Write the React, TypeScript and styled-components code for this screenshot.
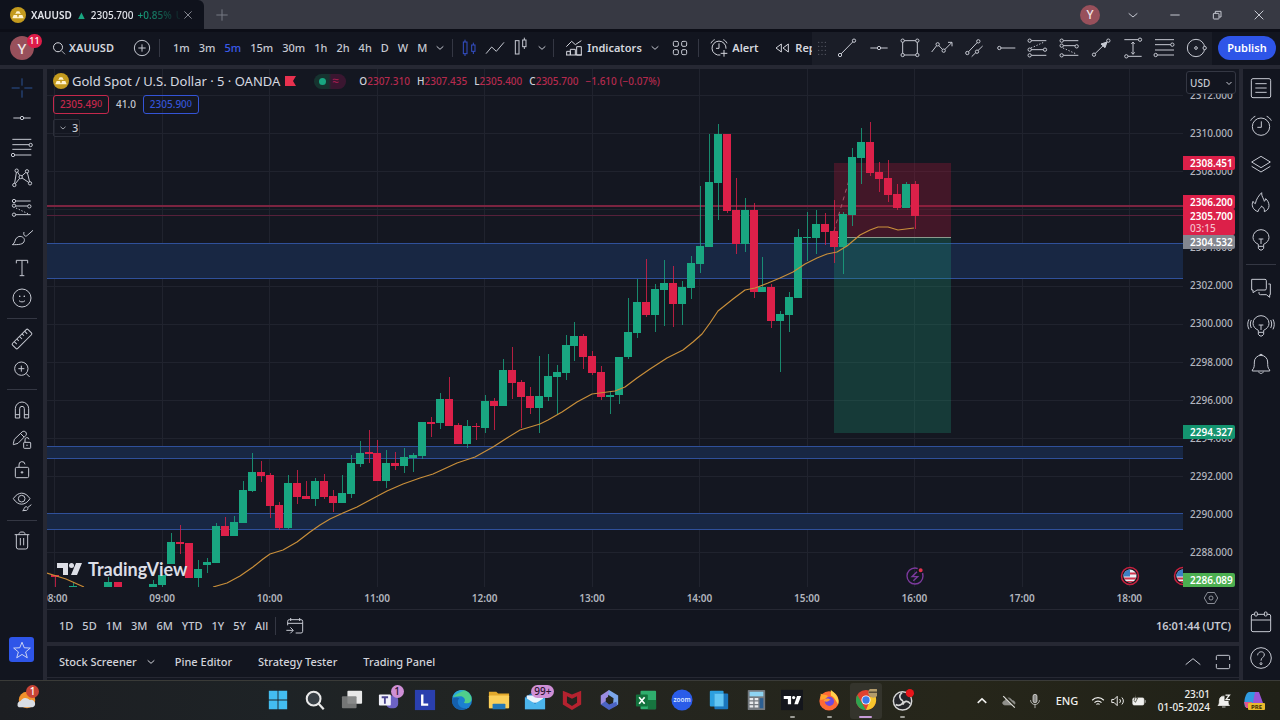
import React from 'react';
import styled, { createGlobalStyle, css } from 'styled-components';

const c = {
  bg: '#141721',
  bar: '#12151f',
  panel: '#1a1d27',
  line: '#262833',
  grid: '#20232e',
  text: '#c6c9d2',
  dim: '#b2b5be',
  blue: '#2e55e8',
  up: '#19a681',
  down: '#dc2049',
};

const Global = createGlobalStyle`
  * { box-sizing: border-box; }
  body { margin: 0; background: ${c.bg}; color: ${c.text}; font: 500 11px/16px 'Noto Sans', 'Open Sans', sans-serif; }
  button, select, a { font: inherit; color: inherit; }
  button { background: none; border: 0; padding: 0; margin: 0; }
`;

/* ---------- shared pieces ---------- */

const Page = styled.div`
  min-height: 100vh;
  display: flex;
  flex-direction: column;
`;

const IconButton = styled.button<{ $w?: number; $h?: number; $color?: string }>`
  width: ${(p) => (p.$w ? `${p.$w}px` : 'auto')};
  height: ${(p) => (p.$h ? `${p.$h}px` : 'auto')};
  color: ${(p) => p.$color || c.text};
  flex: none;
  display: flex;
  align-items: center;
  justify-content: center;
`;

const Svg = styled.svg<{ $size: number }>`
  width: ${(p) => p.$size}px;
  height: ${(p) => p.$size}px;
  flex: none;
  display: block;
  overflow: visible;
  fill: none;
  stroke: currentColor;
  stroke-width: 3;
  .n { fill: ${c.panel}; }
  .f { fill: currentColor; }
  .d { stroke-dasharray: 4 5; }
`;

const Glyph = ({ size = 24, children }: { size?: number; children: React.ReactNode }) => (
  <Svg $size={size} viewBox="0 0 72 72" aria-hidden="true">
    {children}
  </Svg>
);

const P = ({ d, cls }: { d: string; cls?: string }) => <path d={d} className={cls} />;
const Dots = ({ at }: { at: number[][] }) => (
  <>
    {at.map(([x, y]) => (
      <circle key={`${x}-${y}`} cx={x} cy={y} r={5} className="n" />
    ))}
  </>
);

const Chevron = ({ size = 24 }: { size?: number }) => (
  <Glyph size={size}>
    <P d="M26 31 36 40 46 31" />
  </Glyph>
);

const Sep = styled.span`
  width: 7px;
  flex: none;
  display: flex;
  justify-content: center;
  &::before { content: ''; width: 1px; height: 18px; background: #343743; }
`;

const Avatar = styled.span<{ $size: number }>`
  width: ${(p) => p.$size}px;
  height: ${(p) => p.$size}px;
  border-radius: 50%;
  background: #98505b;
  color: #f0e4e6;
  display: flex;
  align-items: center;
  justify-content: center;
  font-size: ${(p) => (p.$size > 20 ? 15 : 12)}px;
  position: relative;
`;

const Gold = ({ size = 16 }: { size?: number }) => (
  <svg width={size} height={size} viewBox="0 0 48 48" aria-hidden="true">
    <circle cx="24" cy="24" r="24" fill="#c39a1e" />
    <path d="M20 13h8l4 8H16zM11 24h10l4 10H7zM27 24h10l4 10H23z" fill="#fff3cf" />
    <path d="M19 21h10M22 29l4 0" stroke="#c39a1e" strokeWidth="2" />
  </svg>
);

/* ---------- browser tab strip ---------- */

const TabStrip = styled.header`
  height: 32px;
  flex: none;
  display: flex;
  background: #373943;
  border-bottom: 3px solid #0c0e17;
`;
const Tab = styled.div`
  width: 204px;
  padding: 0 5px 0 10px;
  display: flex;
  align-items: center;
  background: #0f121c;
  border-radius: 0 6px 0 0;
  color: #e2e4ea;
  font-size: 10px;
`;
const TabTitle = styled.span`
  margin-left: 5px;
  width: 149px;
  flex: none;
  display: flex;
  gap: 4px;
  white-space: nowrap;
  mask-image: linear-gradient(90deg, #000 108px, transparent 154px);
  i { color: ${c.up}; font-style: normal; font-size: 11px; }
  b { font-weight: 600; }
  em { color: ${c.up}; font-style: normal; }
`;
const WindowButtons = styled.div`
  margin-left: auto;
  display: flex;
  align-items: center;
  > span { margin-right: 12px; }
`;

/* ---------- top toolbar ---------- */

const Toolbar = styled.nav`
  height: 37px;
  flex: none;
  display: flex;
  background: ${c.bar};
  border-bottom: 4px solid ${c.line};
`;
const ToolbarMain = styled.div`
  flex: 1 1 0;
  min-width: 0;
  overflow: hidden;
  padding-bottom: 1px;
  display: flex;
  align-items: center;
`;
const AvatarCell = styled.div`
  width: 50px;
  flex: none;
  padding-left: 10px;
`;
const AvatarBadge = styled.span`
  position: absolute;
  left: 17px;
  top: -2px;
  width: 15px;
  height: 14px;
  border-radius: 7px;
  background: #dd1c48;
  color: #fff;
  font-size: 9px;
  line-height: 14px;
  text-align: center;
`;
const TextButton = styled.button<{ $w: number; $pad?: number }>`
  width: ${(p) => p.$w}px;
  padding-left: ${(p) => p.$pad ?? 0}px;
  flex: none;
  display: flex;
  align-items: center;
  gap: 1px;
  font-weight: 600;
  color: #d5d7de;
`;
const Intervals = styled.div`
  min-width: 267px;
  flex: none;
  display: flex;
  padding-left: 5px;
`;
const Interval = styled.button<{ $on?: boolean }>`
  padding: 0 4px 0 5px;
  color: ${(p) => (p.$on ? '#3a5bea' : c.text)};
`;
const DrawingBar = styled.div`
  width: 400px;
  flex: none;
  padding-bottom: 1px;
  display: flex;
  align-items: center;
  background: ${c.panel};
`;
const DrawingTools = styled.div`
  flex: 1;
  display: flex;
  > button { flex: 1; }
`;
const Publish = styled.button`
  width: 58px;
  height: 24px;
  margin: 4px 4px 0 6px;
  flex: none;
  border-radius: 12px;
  background: ${c.blue};
  color: #fff;
  font-weight: 600;
`;

/* ---------- body ---------- */

const Main = styled.main`
  flex: 1;
  display: grid;
  grid-template-columns: 47px minmax(0, 1fr) 41px;
`;
const SideBar = styled.aside<{ $side: 'left' | 'right' }>`
  background: ${c.bar};
  display: flex;
  flex-direction: column;
  align-items: center;
  ${(p) =>
    p.$side === 'left'
      ? css`padding: 4px 0 18px; border-right: 4px solid ${c.line};`
      : css`padding: 0 1px 4px 0; border-left: 4px solid ${c.line};`}
  .n { fill: ${c.bar}; }
`;
const SideLine = styled.hr<{ $h: number }>`
  width: 30px;
  height: ${(p) => p.$h}px;
  margin: 0;
  border: 0;
  flex: none;
  background: linear-gradient(#343743, #343743) center / 100% 1px no-repeat;
`;
const Spacer = styled.span`
  flex: 1;
`;
const StarButton = styled.button`
  width: 25px;
  height: 25px;
  border-radius: 3px;
  background: ${c.blue};
  color: #e6e9f5;
  display: flex;
  align-items: center;
  justify-content: center;
`;

const Center = styled.section`
  display: flex;
  flex-direction: column;
  min-width: 0;
`;
const ChartGrid = styled.div`
  flex: 1;
  display: grid;
  grid-template-columns: minmax(0, 1fr) 56px;
  grid-template-rows: minmax(518px, 1fr) 22px;
`;
const Plot = styled.div`
  position: relative;
  overflow: hidden;
`;
const PlotSvg = styled.svg`
  position: absolute;
  inset: 0;
  width: 100%;
  height: 100%;
`;
const Legend = styled.div`
  position: absolute;
  left: 6px;
  top: 2px;
  right: 0;
`;
const LegendRow = styled.div`
  display: flex;
  align-items: center;
  height: 20px;
`;
const Title = styled.h1`
  margin: 0 5px 0 3px;
  font-size: 13px;
  font-weight: 400;
  white-space: nowrap;
  color: #d6d9e0;
`;
const Status = styled.span`
  width: 32px;
  height: 15px;
  margin: 0 13px 0 18px;
  border-radius: 8px;
  display: flex;
  align-items: center;
  background: linear-gradient(90deg, #16332f 45%, #3a1630 55%);
  color: #b01e55;
  font-size: 12px;
  gap: 6px;
  padding-left: 5px;
  &::before { content: ''; width: 7px; height: 7px; border-radius: 50%; background: ${c.up}; }
`;
const Ohlc = styled.dl`
  margin: 0;
  display: flex;
  gap: 7px;
  font-size: 10px;
  white-space: nowrap;
  div { display: flex; }
  dt { color: #d0d2da; }
  dd { margin: 0; color: #b52a4e; }
`;
const Quotes = styled(LegendRow)`
  margin-top: 3px;
  gap: 7px;
  font-size: 10px;
`;
const Quote = styled.button<{ $c: string }>`
  width: 56px;
  height: 19px;
  border: 1px solid ${(p) => p.$c};
  border-radius: 3px;
  color: ${(p) => p.$c};
  line-height: 16px;
  sup { font-size: 9px; line-height: 0; vertical-align: 1px; }
`;
const Collapse = styled.button`
  width: 27px;
  height: 18px;
  margin-top: 5px;
  border: 1px solid #2c2f3a;
  border-radius: 2px;
  display: flex;
  align-items: center;
`;
const Brand = styled.div`
  position: absolute;
  left: 10px;
  bottom: 7px;
  display: flex;
  align-items: center;
  gap: 6px;
  color: #dcdee6;
  font: 700 18px/22px Lato, 'Open Sans', sans-serif;
`;
const EventPin = styled.div`
  position: absolute;
  bottom: 1px;
  width: 20px;
  height: 20px;
  margin-left: -10px;
`;

const PriceAxis = styled.div`
  position: relative;
  display: flex;
  flex-direction: column;
  font-size: 10px;
  line-height: 12px;
  padding-left: 3px;
  color: ${c.dim};
`;
const Currency = styled.select`
  position: relative;
  z-index: 1;
  appearance: none;
  width: 50px;
  height: 23px;
  margin: 2px 0 0;
  padding: 0 3px;
  border: 1px solid #343743;
  border-radius: 3px;
  background: ${c.bar} url("data:image/svg+xml,%3Csvg xmlns='http://www.w3.org/2000/svg' width='8' height='6' fill='none' stroke='%23c6c9d2'%3E%3Cpath d='M1.500 2 4 4.500 6.500 2'/%3E%3C/svg%3E") right 2px center no-repeat;
  color: ${c.text};
`;
const Ticks = styled.div`
  flex: 1;
  margin: -5px 0 29px 4px;
  display: flex;
  flex-direction: column;
  justify-content: space-between;
`;
const Tick = styled.span<{ $covered: boolean }>`
  visibility: ${(p) => (p.$covered ? 'hidden' : 'visible')};
`;
const PriceTag = styled.div<{ $bg: string; $h?: number }>`
  position: absolute;
  left: 0;
  width: 52px;
  height: ${(p) => p.$h ?? 14}px;
  margin-top: -7px;
  padding: 0 0 0 7px;
  border-radius: 0 2px 2px 0;
  background: ${(p) => p.$bg};
  color: #fff;
  font-weight: 600;
  line-height: 14px;
  small { display: block; font-size: 10px; font-weight: 500; line-height: 11px; color: #f6bfcb; }
`;
const TimeAxis = styled.div`
  overflow: hidden;
  color: ${c.dim};
`;
const TimeLabels = styled.div`
  margin-left: -46px;
  display: flex;
  line-height: 22px;
  font-size: 10px;
  font-weight: 600;
  span { flex: 1; text-align: center; }
`;
const AxisCorner = styled.div`
  display: flex;
  align-items: center;
  justify-content: center;
  color: ${c.dim};
`;

const RangeRow = styled.div`
  height: 33px;
  padding: 0 8px 0 7px;
  border-top: 1px solid ${c.line};
  background: ${c.bar};
  display: flex;
  align-items: center;
`;
const Range = styled.button`
  padding: 0 4px 0 5px;
`;
const Clock = styled.button`
  margin-left: auto;
  font-weight: 600;
`;
const PanelTabs = styled.div`
  height: 36px;
  margin-bottom: 2px;
  border-top: 4px solid ${c.line};
  border-bottom: 1px solid ${c.line};
  background: ${c.bar};
  padding: 0 4px 0 12px;
  display: flex;
  align-items: center;
  gap: 26px;
`;
const PanelTab = styled.button`
  display: flex;
  align-items: center;
  color: #d2d4db;
`;
const Caret = styled.span`
  width: 12px;
  margin: 0 -8px 0 8px;
  display: flex;
  justify-content: center;
`;
const PanelTools = styled.div`
  margin-left: auto;
  display: flex;
  gap: 6px;
`;

/* ---------- taskbar ---------- */

const Taskbar = styled.footer`
  height: 40px;
  flex: none;
  display: grid;
  grid-template-columns: 260px 661px 1fr;
  align-items: center;
  border-top: 1px solid #3a3b38;
  background: linear-gradient(90deg, #1c1e22 0, #1e2326 22%, #24251f 50%, #26261a 75%, #202118 100%);
  color: #f0f0ee;
`;
const Dock = styled.div`
  display: grid;
  grid-template-columns: repeat(18, 1fr);
  justify-items: center;
`;
const AppButton = styled.button<{ $on?: boolean; $run?: boolean }>`
  position: relative;
  width: 32px;
  height: 36px;
  padding-bottom: 1px;
  border-radius: 3px;
  display: flex;
  align-items: center;
  justify-content: center;
  background: ${(p) => (p.$on ? '#34342c' : 'none')};
  svg { width: 22px; height: 22px; display: block; }
  ${(p) =>
    (p.$run || p.$on) &&
    css`
      &::after {
        content: '';
        position: absolute;
        bottom: 1px;
        width: ${p.$on ? 13 : 5}px;
        height: 2px;
        border-radius: 1px;
        background: ${p.$on ? '#c79bd8' : '#9b9b95'};
      }
    `}
`;
const AppBadge = styled.span<{ $w: number }>`
  position: absolute;
  top: 2px;
  left: ${(p) => (p.$w > 14 ? 12 : 18)}px;
  width: ${(p) => p.$w}px;
  height: 13px;
  border-radius: 7px;
  background: #cf8fd6;
  color: #2a1430;
  font-size: 10px;
  line-height: 13px;
  text-align: center;
`;
const WeatherCell = styled.div`
  padding-left: 11px;
`;
const WeatherBadge = styled(AppBadge)`
  background: #c94436;
  color: #fff;
  left: 15px;
`;
const Tray = styled.div`
  display: flex;
  align-items: center;
  justify-content: flex-end;
  padding-right: 10px;
`;
const TrayItem = styled.button<{ $w: number; $dim?: boolean }>`
  width: ${(p) => p.$w}px;
  color: ${(p) => (p.$dim ? '#8f8f8a' : 'inherit')};
  display: flex;
  justify-content: center;
`;
const DateTime = styled.div`
  width: 58px;
  text-align: right;
  white-space: nowrap;
  font-size: 10px;
  line-height: 13px;
`;

/* ---------- chart data ---------- */

type Candle = [x: number, top: number, bottom: number, high: number, low: number, up: 0 | 1];
const candles: Candle[] = [
  [55, 575, 577, 575, 587, 0], [73, 586, 587, 582, 587, 1], [108, 582, 587, 577, 587, 1], [118, 582, 587, 582, 587, 0],
  [153, 584, 587, 580, 587, 1], [162, 575, 585, 575, 587, 1], [171, 542, 564, 533, 564, 1], [180, 542, 544, 525, 554, 0],
  [189, 543, 578, 543, 578, 0], [198, 569, 578, 560, 587, 1], [207, 562, 565, 558, 573, 1], [216, 526, 563, 523, 563, 1],
  [225, 526, 536, 517, 536, 0], [234, 522, 536, 516, 536, 1], [243, 490, 523, 481, 523, 1], [252, 472, 491, 453, 492, 1],
  [261, 472, 476, 461, 482, 0], [270, 475, 506, 473, 518, 0], [279, 505, 528, 502, 530, 0], [288, 483, 528, 475, 529, 1],
  [297, 483, 497, 470, 504, 0], [306, 496, 499, 481, 499, 0], [315, 481, 499, 478, 506, 1], [324, 481, 497, 474, 499, 0],
  [333, 496, 503, 490, 512, 0], [342, 493, 503, 475, 503, 1], [351, 463, 494, 455, 498, 1], [360, 453, 464, 441, 467, 1],
  [369, 452, 454, 430, 463, 0], [377, 453, 481, 440, 481, 0], [386, 463, 481, 450, 488, 1], [395, 463, 466, 452, 470, 0],
  [404, 457, 466, 448, 473, 1], [413, 455, 458, 453, 472, 1], [422, 422, 456, 422, 459, 1], [431, 422, 424, 417, 437, 0],
  [440, 399, 423, 393, 429, 1], [449, 399, 426, 377, 426, 0], [458, 425, 444, 423, 444, 0], [467, 426, 444, 420, 448, 1],
  [476, 426, 427, 423, 440, 0], [485, 401, 428, 395, 433, 1], [494, 401, 406, 398, 430, 0], [503, 370, 406, 359, 406, 1],
  [512, 370, 383, 347, 399, 0], [521, 382, 397, 380, 428, 0], [530, 396, 408, 387, 414, 0], [539, 396, 408, 356, 433, 1],
  [548, 376, 397, 354, 401, 1], [557, 372, 377, 365, 414, 1], [566, 345, 373, 335, 380, 1], [574, 336, 346, 322, 361, 1],
  [583, 336, 357, 334, 369, 0], [592, 356, 373, 351, 375, 0], [601, 372, 397, 366, 400, 0], [610, 395, 397, 391, 414, 1],
  [619, 357, 395, 357, 404, 1], [628, 332, 357, 298, 359, 1], [637, 302, 333, 279, 338, 1], [646, 302, 315, 259, 317, 0],
  [655, 289, 315, 284, 332, 1], [664, 283, 290, 260, 326, 1], [673, 283, 304, 266, 327, 0], [682, 287, 304, 281, 325, 1],
  [691, 263, 288, 256, 299, 1], [700, 246, 264, 186, 273, 1], [709, 182, 247, 134, 247, 1], [718, 134, 183, 124, 220, 1],
  [727, 134, 211, 134, 213, 0], [736, 210, 244, 178, 254, 0], [745, 210, 244, 198, 252, 1], [754, 210, 292, 203, 298, 0],
  [762, 287, 292, 257, 292, 1], [771, 287, 321, 284, 328, 0], [780, 314, 321, 311, 372, 1], [789, 297, 315, 292, 332, 1],
  [798, 237, 298, 229, 298, 1], [807, 237, 238, 212, 261, 1], [816, 224, 238, 210, 254, 1], [825, 224, 232, 213, 245, 0],
  [834, 231, 247, 200, 263, 0], [843, 214, 247, 212, 274, 1], [852, 157, 215, 148, 226, 1], [861, 142, 158, 128, 184, 1],
  [870, 142, 173, 122, 176, 0], [879, 172, 179, 162, 192, 0], [888, 178, 195, 160, 202, 0], [897, 194, 208, 184, 210, 0],
  [906, 184, 208, 182, 208, 1], [915, 184, 216, 181, 229, 0],
];
const maTail = '47,573 66,579 84,587';
const ma =
  '213,587 227,583 240,576 253,567 263,559 270,554 283,550 297,542 310,532 320,525 330,519 343,513 357,507 370,500 387,491 403,484 420,478 433,474 457,463 475,457 493,447 507,438 520,430 540,424 548,420 562,412 577,402 592,394 615,391 625,387 637,378 650,369 667,358 683,350 693,342 702,334 710,323 718,311 733,299 745,290 755,288 768,283 780,278 793,272 805,264 817,258 827,254 837,252 847,246 860,235 870,230 878,227 888,227 898,230 914,228';
const bands = [[244, 278], [447, 458], [514, 529]];
const vLines = [54, 162, 269, 377, 484, 592, 699, 807, 914, 1022, 1129];
const hours = ['08:00', '09:00', '10:00', '11:00', '12:00', '13:00', '14:00', '15:00', '16:00', '17:00', '18:00'];
const prices = Array.from({ length: 13 }, (_, i) => `${2312 - i * 2}.000`);

const priceTop = (price: number) => `${(((2310 - price) * 19.05 + 64) / 518) * 100}%`;
const tags = [
  { label: '2308.451', at: 2308.451, bg: c.down },
  { label: '2306.200', at: 2306.36, bg: c.down },
  { label: '2305.700', at: 2305.63, bg: c.down, note: '03:15' },
  { label: '2304.532', at: 2304.28, bg: '#83868f' },
  { label: '2294.327', at: 2294.327, bg: '#14946f' },
  { label: '2286.089', at: 2286.53, bg: '#4caf50' },
];

const Chart = () => (
  <PlotSvg viewBox="47 69 1136 518" preserveAspectRatio="none" aria-label="Gold Spot five minute candles">
    <g fill={c.grid}>
      {vLines.map((x) => <rect key={x} x={x} y={69} width={1} height={518} />)}
      {prices.map((p, i) => <rect key={p} x={47} y={Math.round(95 + i * 38.1)} width={1136} height={1} />)}
    </g>
    {bands.map(([a, b]) => (
      <g key={a}>
        <rect x={47} y={a} width={1136} height={b - a} fill="#182743" />
        <path d={`M47 ${a - 0.5}H1183M47 ${b + 0.5}H1183`} stroke="#2f509a" />
      </g>
    ))}
    <rect x={47} y={205} width={1136} height={2} fill="#7b2440" />
    <rect x={47} y={215} width={1136} height={1} fill="#56203a" />
    <rect x={834} y={163} width={117} height={75} fill="#b01838" fillOpacity={0.3} />
    <rect x={834} y={238} width={117} height={195} fill="#1f9a78" fillOpacity={0.27} />
    <rect x={834} y={237} width={117} height={1} fill="#8b9a8e" />
    <path d="M834 231 852 170" stroke="#a05a6a" strokeDasharray="4 4" fill="none" />
    {candles.map(([x, t, b, h, l, up]) => (
      <g key={x} fill={up ? c.up : c.down}>
        <rect x={x} y={h} width={1} height={l - h} fillOpacity={0.8} />
        <rect x={x - 4} y={t} width={8} height={b - t} />
      </g>
    ))}
    <path d={`M${maTail}`} stroke="#c98a35" fill="none" strokeWidth={1.2} />
    <path d={`M${ma}`} stroke="#c98f3a" fill="none" strokeWidth={1.2} strokeLinejoin="round" />
  </PlotSvg>
);

/* ---------- icon sets ---------- */

const drawing: [string, React.ReactNode][] = [
  ['Trend line', <><P d="M15 57 57 14" /><Dots at={[[57, 14], [15, 57]]} /></>],
  ['Horizontal line', <><P d="M10 36H62" /><Dots at={[[36, 36]]} /></>],
  ['Rectangle', <><P d="M14 14H58V57H14Z" /><Dots at={[[14, 14], [58, 14], [14, 57], [58, 57]]} /></>],
  ['Path', <><P d="M5 48 23 25 41 44 66 19M54 19H66V31" /><Dots at={[[23, 25], [41, 44]]} /></>],
  ['Parallel channel', <><P d="M16 51 49 16M29 62 62 30" /><Dots at={[[49, 16], [16, 51], [45, 47]]} /></>],
  ['Horizontal ray', <><P d="M16 36H64" /><Dots at={[[16, 36]]} /></>],
  ['Short position', <><P d="M14 14H64M14 41H56M14 58H64" /><P d="M18 36 58 18" cls="d" /><Dots at={[[14, 14], [14, 41], [60, 41], [14, 58]]} /></>],
  ['Long position', <><P d="M14 14H64M14 29H56M14 58H64" /><P d="M18 36 58 54" cls="d" /><Dots at={[[14, 14], [14, 29], [59, 31], [14, 58]]} /></>],
  ['Arrow', <><P d="M15 56 58 14" /><P d="M54 18 48 35 36 24Z" cls="f" /><Dots at={[[15, 56], [58, 14]]} /></>],
  ['Price range', <><P d="M10 11H56M16 61H62M36 20V53M31 24 36 18 41 24M31 49 36 55 41 49" /><Dots at={[[57, 11], [16, 61]]} /></>],
  ['Fib retracement', <><P d="M9 11H66M9 26H62M9 42H66M14 57H66" /><Dots at={[[61, 26], [11, 57]]} /></>],
  ['Circle', <><circle cx="36" cy="36" r="26" /><circle cx="36" cy="36" r="4" /><Dots at={[[62, 36]]} /></>],
];

const bulb =
  'M28 55V49C18 44 12 37 12 28A24 23 0 0 1 60 28C60 37 54 44 44 49V55ZM28 55V61L33 66H39L44 61V55M29 33H43M36 33V48';
const left: ([string, React.ReactNode, string?] | number)[] = [
  ['Cursor', <P d="M36 7V29M36 43V65M5 36H29M43 36H67" />, '#2a5394'],
  ['Trend lines', <><P d="M10 36H62" /><Dots at={[[36, 36]]} /></>],
  ['Fib tools', <><P d="M7 10H64M7 26H62M7 40H64M12 57H64" /><Dots at={[[62, 27], [9, 57]]} /></>],
  ['Patterns', <><P d="M13 57 20 14 32 33 51 16 60 52 32 33Z" /><Dots at={[[20, 14], [51, 16], [32, 33], [13, 57], [60, 52]]} /></>],
  ['Prediction tools', <><P d="M12 15H62M12 30H56M12 56H62" /><P d="M18 36 56 54" cls="d" /><Dots at={[[12, 15], [12, 29], [58, 31], [12, 56]]} /></>],
  ['Brush', <P d="M7 56C17 52 12 40 23 33 32 28 45 34 43 44 41 56 26 56 7 56ZM42 18C39 28 46 34 52 28L69 13" />],
  ['Text', <P d="M19 22V13H53V22M36 13V59M29 59H43" />],
  ['Emoji', <><circle cx="36" cy="36" r="27" /><P d="M27 44C31 49 41 49 45 44M27 31H31M41 31H45M29 29V33M43 29V33" /></>],
  11,
  ['Measure', <g transform="rotate(-45 36 36)"><rect x="3" y="25" width="66" height="22" rx="4" /><P d="M14 25V36M25 25V33M36 25V36M47 25V33M58 25V36" /></g>],
  ['Zoom in', <><circle cx="34" cy="35" r="20" /><P d="M48 49 59 60M34 26V44M25 35H43" /></>],
  11,
  ['Magnet', <P d="M16 60V32A20 20 0 0 1 56 32V60H43V32A7 7 0 0 0 29 32V60ZM16 50H29M43 50H56" />],
  ['Stay in drawing mode', <><P d="M10 47 13 34 36 12C39 9 44 9 47 12 50 16 50 20 47 23L24 46 10 50ZM32 17 42 27" /><rect x="41" y="43" width="21" height="18" rx="2" /><P d="M45 43V36A6 6 0 0 1 57 34M51 50V54" /></>],
  ['Lock all drawings', <><rect x="16" y="28" width="40" height="31" rx="4" /><P d="M27 28V21A9 9 0 0 1 45 19M36 39V47M32 43H40" /></>],
  ['Hide all drawings', <><P d="M10 32C24 10 46 10 60 32 46 54 24 54 10 32Z" /><circle cx="35" cy="32" r="10" /><P d="M38 68C44 66 40 58 48 56 54 56 56 64 50 67ZM54 58 64 50" /></>],
  11,
  ['Remove objects', <P d="M14 17H58M27 17C27 10 30 9 36 9 42 9 45 10 45 17M19 17V54A6 6 0 0 0 25 60H47A6 6 0 0 0 53 54V17M31 27V49M41 27V49" />],
];
const right: ([string, React.ReactNode] | number)[] = [
  ['Watchlist', <><rect x="7" y="8" width="58" height="57" rx="5" /><P d="M19 23H53M19 36H53M19 49H53" /></>],
  ['Alerts', <><circle cx="36" cy="38" r="26" /><P d="M37 22V40H25M5 20C8 14 13 9 19 7M67 20C64 14 59 9 53 7" /></>],
  ['Object tree', <P d="M8 30 36 13 64 30 36 47ZM8 43 36 60 64 43" />],
  ['Hotlists', <P d="M27 65C12 60 6 46 12 34 15 40 17 40 19 41 22 26 30 16 38 8 37 20 44 24 46 34 48 32 49 30 50 26 62 36 66 58 46 65 48 56 42 52 38 48 36 54 28 56 27 65Z" />],
  ['Ideas', <P d={bulb} />],
  10,
  ['Chats', <P d="M8 10H48A4 4 0 0 1 52 14V38A4 4 0 0 1 48 42H24L12 50V42H8ZM58 24H64V56H62V64L52 56H34A4 4 0 0 1 30 52V48" />],
  ['Ideas stream', <><P d={bulb} /><P d="M7 18C3 26 3 34 7 42M65 18C69 26 69 34 65 42M0 16C-5 26-5 36 0 46M72 16C77 26 77 36 72 46" /></>],
  ['Notifications', <P d="M10 57V54C16 48 16 42 16 30A20 20 0 0 1 56 30C56 42 56 48 62 54V57ZM31 10C31 6 41 6 41 10M29 59C30 66 42 66 43 59" />],
];

const RailIcon = ({ item, cell }: { item: [string, React.ReactNode, string?]; cell: number }) => (
  <IconButton $w={36} $h={cell} $color={item[2]} aria-label={item[0]}>
    <Glyph>{item[1]}</Glyph>
  </IconButton>
);

const Flag = ({ id }: { id: string }) => (
  <svg width="20" height="20" viewBox="0 0 20 20" aria-hidden="true">
    <circle cx="10" cy="10" r="8.500" fill="#14161f" stroke="#c9213f" strokeWidth="1.500" />
    <clipPath id={id}><circle cx="10" cy="10" r="6.500" /></clipPath>
    <g clipPath={`url(#${id})`}>
      <rect width="20" height="20" fill="#eceff4" />
      <path d="M10 7.500H20M3 12.500H17M3 16H17" stroke="#d0354c" strokeWidth="1.800" />
      <rect x="3" y="3" width="7" height="7.500" fill="#3c7fc4" />
    </g>
  </svg>
);

type DockApp = { name: string; art: React.ReactNode; badge?: [string, number]; run?: boolean; on?: boolean };
const dock: DockApp[] = [
  { name: 'Start', art: <path d="M2 2H11.500V11.500H2ZM12.500 2H22V11.500H12.500ZM2 12.500H11.500V22H2ZM12.500 12.500H22V22H12.500Z" fill="#43bdf0" /> },
  { name: 'Search', art: <><circle cx="10.500" cy="10.500" r="7.500" fill="#394046" stroke="#e9e9e9" strokeWidth="2.200" /><path d="M16 16 21.500 22" stroke="#e9e9e9" strokeWidth="2.400" /></> },
  { name: 'Task view', art: <><rect x="7" y="2" width="16" height="14" rx="1" fill="#e8e8e8" /><rect x="1" y="8" width="16" height="13" rx="1" fill="#7d7f80" fillOpacity=".9" /></> },
  { name: 'Teams', art: <><rect x="9" y="7" width="13" height="14" rx="5" fill="#6c62c4" /><rect x="1" y="6" width="13" height="12" rx="1" fill="#f1f1fa" /><path d="M4 9H11M7.500 9V16" stroke="#4b4590" strokeWidth="2" /></>, badge: ['1', 13] },
  { name: 'L app', art: <><rect x="1" y="1" width="22" height="22" fill="#2a3fae" /><path d="M9 6V17H15.500" stroke="#fff" strokeWidth="2.600" fill="none" /></> },
  { name: 'Edge', art: <><circle cx="12" cy="12" r="11" fill="#1b7fd0" /><path d="M2 9C5 0 18-2 22 8 24 14 19 17 14 15 17 12 14 8 10 8 6 8 3 9 2 9Z" fill="#4fce8c" /><path d="M2 8C4 2 10 0 15 2 11 3 6 5 2 9Z" fill="#2aa9d8" /><path d="M9 10C5 14 9 22 17 21 11 25 1 22 1 12 3 9 6 9 9 10Z" fill="#1560ad" /></> },
  { name: 'File Explorer', art: <><path d="M1 3H9L11 5H23V21H1Z" fill="#e2a92c" /><rect x="1" y="7" width="22" height="14" rx="1" fill="#fbd05a" /><path d="M5 22V17A1 1 0 0 1 6 16H18A1 1 0 0 1 19 17V22Z" fill="#2378b8" /></> },
  { name: 'Mail', art: <><path d="M1 9 12 2 23 9V22H1Z" fill="#1f6cb0" /><path d="M3 7H21V15H3Z" fill="#e9f4fb" /><path d="M1 9 12 16 23 9V22H1Z" fill="#4cb5ec" /></>, badge: ['99+', 23] },
  { name: 'McAfee', art: <path d="M2 2 12 6 22 2V17L12 23 2 17ZM6.500 8V15L12 18.500 17.500 15V8L12 10.500Z" fill="#b5222f" fillRule="evenodd" /> },
  { name: 'Microsoft 365', art: <><path d="M12 1 22 7V17L16 20 17 10 9 5Z" fill="#7ba6ea" /><path d="M3 7 12 1 10 15 3 17Z" fill="#9a8be0" /><path d="M3 17 10 12 12 17 20 14 21 18 12 23Z" fill="#4b63c4" /><path d="M12 8 16 10.500V14L12 16.500 8.500 14V10Z" fill="#25261f" /></> },
  { name: 'Excel', art: <><rect x="6" y="2" width="17" height="20" rx="1" fill="#2fae6d" /><rect x="14" y="12" width="9" height="10" fill="#17753f" /><rect x="1" y="6" width="13" height="13" rx="1" fill="#12723c" /><path d="M4.500 9 10.500 16M10.500 9 4.500 16" stroke="#fff" strokeWidth="1.800" /></> },
  { name: 'Zoom', art: <><circle cx="12" cy="12" r="11.500" fill="#2a5ce8" /><text x="12" y="14.500" fontSize="7" fontWeight="600" textAnchor="middle" fill="#dbe6ff">zoom</text></> },
  { name: 'Phone Link', art: <><rect x="2" y="2" width="15" height="17" rx="1" fill="#2c9fdf" /><rect x="7" y="5" width="15" height="17" rx="1" fill="#1a76bd" /><rect x="7" y="5" width="10" height="14" fill="#63c6f4" /></> },
  { name: 'Calculator', art: <><rect x="3" y="1" width="19" height="22" rx="1" fill="#767b80" /><rect x="5" y="3" width="15" height="5" fill="#8ed4f2" /><path d="M5 11H9M5 15H9M5 19H9M10.500 11H14.500M10.500 15H14.500M10.500 19H14.500" stroke="#e8eaec" strokeWidth="2.600" /><rect x="16" y="10" width="4" height="11" fill="#2c5f92" /></> },
  { name: 'TradingView', art: <><rect x="0" y="1" width="24" height="22" fill="#14161c" /><path d="M3 7.500H11V16.500H7.500V11H3ZM17.500 7.500H22L18.500 16.500H14.500Z" fill="#fff" /><circle cx="13.800" cy="9.300" r="1.800" fill="#fff" /></>, run: true },
  { name: 'Firefox', art: <><circle cx="12" cy="13" r="10.500" fill="#ff6a35" /><path d="M14 1C20 5 24 11 22 17 19 12 18 9 14 7Z" fill="#ffd24a" /><path d="M3 5C5 7 8 6 11 7.500L8 11 2.500 12Z" fill="#ffa62e" /><circle cx="12.500" cy="13.500" r="5" fill="#6c4ae0" /><path d="M6 13C8 9 12 10 14 12 12 12 11 14 9 14Z" fill="#ff9a36" /></>, run: true },
  { name: 'Chrome', art: <><circle cx="12" cy="12" r="11" fill="#e0402f" /><path d="M2.500 6.500 12 23A11 11 0 0 1 2.500 6.500Z" fill="#2ea44f" /><path d="M22.500 8.500A11 11 0 0 1 12 23L16.500 12 14 8.500Z" fill="#f8c52c" /><circle cx="12" cy="12" r="5" fill="#fff" /><circle cx="12" cy="12" r="4" fill="#3b78e7" /><circle cx="20" cy="4" r="5.500" fill="#b39b6a" /><path d="M15 3.500H25" stroke="#4d4434" strokeWidth="1.500" /></>, on: true },
  { name: 'OBS', art: <><circle cx="11.500" cy="13" r="10" fill="#24252a" stroke="#d5d5d5" strokeWidth="1.600" /><path d="M11 4C7 7 8 11 12 13M20 16C17 12 13 13 12 17M4 17C8 19 12 17 12 13" stroke="#d5d5d5" strokeWidth="1.800" fill="none" /><circle cx="19.500" cy="4.500" r="4.500" fill="#e8151a" /></>, run: true },
];

export default function App() {
  return (
    <Page>
      <Global />
      <TabStrip>
        <Tab>
          <Gold />
          <TabTitle><b>XAUUSD</b><i>▲</i><span>2305.700</span><em>+0.85%</em><em>U</em></TabTitle>
          <IconButton $w={16} $color="#9a9ca6" aria-label="Close tab"><Glyph size={20}><P d="M23 23 49 49M49 23 23 49" /></Glyph></IconButton>
        </Tab>
        <IconButton $w={35} $color="#777a84" aria-label="New tab"><Glyph><P d="M36 19V53M19 36H53" /></Glyph></IconButton>
        <WindowButtons>
          <Avatar $size={20}>Y</Avatar>
          <IconButton $w={42} aria-label="More"><Glyph><P d="M23 31 36 42 49 31" /></Glyph></IconButton>
          <IconButton $w={42} aria-label="Minimize"><Glyph><P d="M22 36H50" /></Glyph></IconButton>
          <IconButton $w={42} aria-label="Restore"><Glyph><rect x="25" y="31" width="17" height="17" rx="2" /><P d="M31 30V25H48V42H43" /></Glyph></IconButton>
          <IconButton $w={42} aria-label="Close window"><Glyph><P d="M23 23 49 49M49 23 23 49" /></Glyph></IconButton>
        </WindowButtons>
      </TabStrip>

      <Toolbar>
        <ToolbarMain>
          <AvatarCell><Avatar $size={24}>Y<AvatarBadge>11</AvatarBadge></Avatar></AvatarCell>
          <TextButton $w={77}><Glyph size={18}><circle cx="32" cy="33" r="18" strokeWidth="4" /><P d="M46 47 60 61" /></Glyph>XAUUSD</TextButton>
          <IconButton $w={29} aria-label="Compare symbols"><Glyph><circle cx="36" cy="36" r="23" /><P d="M36 25V47M25 36H47" /></Glyph></IconButton>
          <Sep />
          <Intervals>
            {['1m', '3m', '5m', '15m', '30m', '1h', '2h', '4h', 'D', 'W', 'M'].map((t) => (
              <Interval key={t} $on={t === '5m'}>{t}</Interval>
            ))}
          </Intervals>
          <IconButton $w={18} aria-label="More intervals"><Chevron /></IconButton>
          <Sep />
          <IconButton $w={26} $color="#3450c8" aria-label="Candles"><Glyph><rect x="19" y="18" width="11" height="35" /><rect x="44" y="27" width="10" height="19" /><P d="M24 11V18M24 53V60M49 20V27M49 46V54" /></Glyph></IconButton>
          <IconButton $w={26} aria-label="Line"><Glyph><P d="M9 53 26 33 40 46 63 19" /></Glyph></IconButton>
          <IconButton $w={26} aria-label="Bars"><Glyph><rect x="19" y="14" width="11" height="40" /><rect x="41" y="12" width="10" height="20" /><P d="M46 5V12M46 32V39" /></Glyph></IconButton>
          <IconButton $w={16} aria-label="More styles"><Chevron /></IconButton>
          <Sep />
          <TextButton $w={88} $pad={5}><Glyph><P d="M13 32 29 16 40 26 58 14M14 57V46H25V57M25 57V40H40V57M44 57V32H58V57ZM12 57H60" /></Glyph>Indicators</TextButton>
          <IconButton $w={20} aria-label="Favourite indicators"><Chevron /></IconButton>
          <IconButton $w={30} aria-label="Templates"><Glyph><rect x="16" y="16" width="15" height="15" rx="4" /><rect x="41" y="16" width="15" height="15" rx="4" /><rect x="16" y="41" width="15" height="15" rx="4" /><rect x="41" y="41" width="15" height="15" rx="4" /></Glyph></IconButton>
          <Sep />
          <TextButton $w={62} $pad={5}><Glyph><P d="M40 57A21 21 0 1 1 57 38M36 22V37H27M12 22C14 17 18 13 23 11M60 22C58 17 54 13 49 11M51 42V62M41 52H61" /></Glyph>Alert</TextButton>
          <TextButton $w={70} $pad={6}><Glyph><P d="M18 36 34 24V48ZM39 36 55 24V48Z" /></Glyph>Replay</TextButton>
        </ToolbarMain>
        <DrawingBar>
          <IconButton $w={19} $color="#5a5d68" aria-label="Move toolbar"><Glyph><g className="f" stroke="none">{[19, 31, 43, 55].map((y) => [26, 36, 46].map((x) => <circle key={`${x}${y}`} cx={x} cy={y} r="2" />))}</g></Glyph></IconButton>
          <DrawingTools>
            {drawing.map(([name, art]) => (
              <IconButton key={name} aria-label={name}><Glyph>{art}</Glyph></IconButton>
            ))}
          </DrawingTools>
        </DrawingBar>
        <Publish>Publish</Publish>
      </Toolbar>

      <Main>
        <SideBar $side="left">
          {left.map((it, i) => (typeof it === 'number' ? <SideLine key={i} $h={it} /> : <RailIcon key={it[0]} item={it} cell={30} />))}
          <Spacer />
          <StarButton aria-label="Favourite tools"><Glyph size={20}><P d="M36 8 44 28 66 29 49 43 55 64 36 52 17 64 23 43 6 29 28 28Z" /></Glyph></StarButton>
        </SideBar>

        <Center>
          <ChartGrid>
            <Plot>
              <Chart />
              <Brand>
                <svg width="25" height="14" viewBox="0 0 25 14" aria-hidden="true"><path d="M0 1H11V13H6V6H0ZM19 1H25L20 13H14Z" fill="currentColor" /><circle cx="14.500" cy="3.500" r="2.500" fill="currentColor" /></svg>
                TradingView
              </Brand>
              <EventPin style={{ left: '76.4%' }}>
                <svg width="20" height="20" viewBox="0 0 60 60" fill="none" stroke="#7d3a9e" strokeWidth="4" aria-hidden="true"><circle cx="30" cy="30" r="24" /><path d="M36 17 21 32H38L25 44" /><circle cx="47" cy="13" r="8" fill="#e0334e" stroke="#141721" /></svg>
              </EventPin>
              <EventPin style={{ left: '95.3%' }}><Flag id="flag-a" /></EventPin>
              <EventPin style={{ left: '100%' }}><Flag id="flag-b" /></EventPin>
              <Legend>
                <LegendRow>
                  <Gold />
                  <Title>Gold Spot / U.S. Dollar · 5 · OANDA</Title>
                  <svg width="11" height="10" viewBox="0 0 11 10" aria-hidden="true"><path d="M0 0H11L8 5 11 10H0Z" fill="#e8314f" /></svg>
                  <Status>≈</Status>
                  <Ohlc>
                    {[['O', '2307.310'], ['H', '2307.435'], ['L', '2305.400'], ['C', '2305.700'], ['', '−1.610 (−0.07%)']].map(([k, v]) => (
                      <div key={k}><dt>{k}</dt><dd>{v}</dd></div>
                    ))}
                  </Ohlc>
                </LegendRow>
                <Quotes>
                  <Quote $c="#c4284c">2305.49<sup>0</sup></Quote>
                  <span>41.0</span>
                  <Quote $c="#3454d6">2305.90<sup>0</sup></Quote>
                </Quotes>
                <Collapse><Chevron size={18} />3</Collapse>
              </Legend>
            </Plot>
            <PriceAxis>
              <Currency aria-label="Currency" defaultValue="USD"><option>USD</option></Currency>
              <Ticks>{prices.map((p) => <Tick key={p} $covered={p === '2306.000'}>{p}</Tick>)}</Ticks>
              {tags.map((t) => (
                <PriceTag key={t.label} $bg={t.bg} $h={t.note ? 26 : 14} style={{ top: priceTop(t.at) }}>
                  {t.label}
                  {t.note && <small>{t.note}</small>}
                </PriceTag>
              ))}
            </PriceAxis>
            <TimeAxis><TimeLabels>{hours.map((h) => <span key={h}>{h}</span>)}</TimeLabels></TimeAxis>
            <AxisCorner><Glyph size={18}><P d="M22 14H50L63 36 50 58H22L9 36Z" /><circle cx="36" cy="36" r="8" /></Glyph></AxisCorner>
          </ChartGrid>

          <RangeRow>
            {['1D', '5D', '1M', '3M', '6M', 'YTD', '1Y', '5Y', 'All'].map((t) => <Range key={t}>{t}</Range>)}
            <Sep />
            <IconButton $w={32} aria-label="Go to date"><Glyph><P d="M14 34V22A5 5 0 0 1 19 17H54A5 5 0 0 1 59 22V52A5 5 0 0 1 54 57H38M14 28H59M23 12V21M50 12V21M10 49H30M22 40 31 49 22 58" /></Glyph></IconButton>
            <Clock>16:01:44 (UTC)</Clock>
          </RangeRow>
          <PanelTabs>
            <PanelTab>Stock Screener<Caret><Chevron /></Caret></PanelTab>
            <PanelTab>Pine Editor</PanelTab>
            <PanelTab>Strategy Tester</PanelTab>
            <PanelTab>Trading Panel</PanelTab>
            <PanelTools>
              <IconButton aria-label="Open panel"><Glyph><P d="M14 44 36 26 58 44" /></Glyph></IconButton>
              <IconButton aria-label="Maximize panel"><Glyph><P d="M16 30V20A4 4 0 0 1 20 16H52A4 4 0 0 1 56 20V30M56 42V52A4 4 0 0 1 52 56H20A4 4 0 0 1 16 52V42" /></Glyph></IconButton>
            </PanelTools>
          </PanelTabs>
        </Center>

        <SideBar $side="right">
          {right.map((it, i) => (typeof it === 'number' ? <SideLine key={i} $h={it} /> : <RailIcon key={it[0]} item={it} cell={38} />))}
          <Spacer />
          <RailIcon cell={36} item={['Calendar', <><rect x="7" y="13" width="58" height="52" rx="5" /><P d="M7 30H65" /><rect x="17" y="6" width="8" height="12" rx="3" className="n" /><rect x="46" y="6" width="8" height="12" rx="3" className="n" /></>]} />
          <RailIcon cell={36} item={['Help', <><circle cx="36" cy="36" r="31" /><P d="M26 28C26 14 47 14 46 27 45 35 36 34 36 44" /><circle cx="36" cy="53" r="3" /></>]} />
        </SideBar>
      </Main>

      <Taskbar>
        <WeatherCell>
          <AppButton aria-label="Weather"><svg viewBox="0 0 24 24"><circle cx="12" cy="12" r="9" fill="#f0912c" /><path d="M3 20A4 4 0 0 1 5 13 6 6 0 0 1 15 12 4 4 0 0 1 18 20Z" fill="#d9dde4" /></svg><WeatherBadge $w={13}>1</WeatherBadge></AppButton>
        </WeatherCell>
        <Dock>
          {dock.map((a) => (
            <AppButton key={a.name} $on={a.on} $run={a.run} aria-label={a.name}>
              <svg viewBox="0 0 24 24">{a.art}</svg>
              {a.badge && <AppBadge $w={a.badge[1]}>{a.badge[0]}</AppBadge>}
            </AppButton>
          ))}
        </Dock>
        <Tray>
          <TrayItem $w={28} aria-label="Hidden icons"><Glyph size={22}><g strokeWidth="5"><P d="M22 42 36 29 50 42" /></g></Glyph></TrayItem>
          <TrayItem $w={26} $dim aria-label="OneDrive paused"><Glyph size={16}><P d="M18 54C4 54 4 36 18 35 22 18 44 18 50 34 66 34 68 54 54 54Z" cls="f" /><path d="M14 12 64 62" stroke="#26261a" strokeWidth="10" /><path d="M10 14 62 66" stroke="#e0e0dc" strokeWidth="5" /></Glyph></TrayItem>
          <TrayItem $w={26} aria-label="Microphone"><Glyph size={16}><rect x="27" y="6" width="18" height="38" rx="9" fill="#8d8d8a" /><P d="M16 32A20 20 0 0 0 56 32M36 52V68" /></Glyph></TrayItem>
          <TrayItem $w={38}>ENG</TrayItem>
          <TrayItem $w={24} aria-label="Wi-Fi"><Glyph size={14}><g strokeWidth="6"><P d="M6 32C24 14 48 14 66 32M18 44C28 34 44 34 54 44M28 54C32 49 40 49 44 54" /></g></Glyph></TrayItem>
          <TrayItem $w={16} aria-label="Volume"><Glyph size={14}><g strokeWidth="5"><P d="M4 28H16L32 12V60L16 44H4ZM44 26C50 32 50 40 44 46M56 18C66 28 66 44 56 54" /></g></Glyph></TrayItem>
          <TrayItem $w={26} aria-label="Battery"><Glyph size={16}><rect x="8" y="22" width="50" height="32" rx="6" className="f" /><P d="M64 32V44" /><path d="M14 34 22 6V22H30L20 42Z" fill="#f0f0ee" stroke="#26261a" /></Glyph></TrayItem>
          <DateTime>23:01<br />01-05-2024</DateTime>
          <TrayItem $w={28} aria-label="Notifications"><Glyph size={18}><P d="M12 54C20 48 16 38 18 30 20 12 50 12 52 30 54 38 50 48 58 54ZM28 60H42" cls="f" /><path d="M38 14H60V36H38Z" fill="#22231a" stroke="none" /><g strokeWidth="5"><P d="M42 12H58L44 30H60" /></g></Glyph></TrayItem>
          <TrayItem $w={32} aria-label="Copilot">
            <svg width="24" height="24" viewBox="0 0 24 24" aria-hidden="true"><path d="M7 3H14L12 18H3C1 12 4 3 7 3Z" fill="#2f9be0" /><path d="M13 3H17L21 14 15 18H10Z" fill="#9a55d6" /><path d="M2 13H10L9 19H4Z" fill="#e0558f" /><rect x="6" y="14" width="17" height="7" rx="1" fill="#e8b92d" /><text x="14.500" y="20" fontSize="6" fontWeight="700" textAnchor="middle" fill="#3a2c06">PRE</text></svg>
          </TrayItem>
        </Tray>
      </Taskbar>
    </Page>
  );
}
